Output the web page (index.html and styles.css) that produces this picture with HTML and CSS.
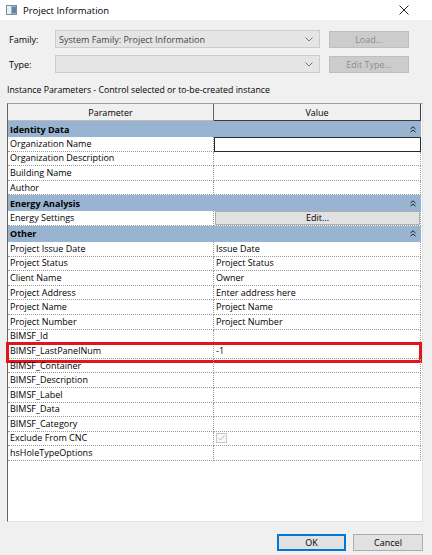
FILE: index.html
```html
<!DOCTYPE html>
<html>
<head>
<meta charset="utf-8">
<link rel="stylesheet" href="styles.css">
</head>
<body>
<div class="dialog">
  <div class="titlebar">
    <svg class="app-icon" width="11" height="10" viewBox="0 0 11 10">
      <rect x="0.5" y="0.5" width="10" height="9" fill="#9fb3c4" stroke="#7d8c99"/>
      <rect x="1" y="1" width="4" height="8" fill="#e9eef2"/>
      <rect x="6" y="2" width="4" height="6" fill="#5f86aa"/>
    </svg>
    <span class="title">Project Information</span>
    <svg class="close" width="10" height="10" viewBox="0 0 10 10">
      <path d="M0.5 0.5 L9.5 9.5 M9.5 0.5 L0.5 9.5" stroke="#222" stroke-width="1" fill="none"/>
    </svg>
  </div>

  <div class="form">
    <div class="form-row">
      <span class="label">Family:</span>
      <div class="combo">
        <span class="combo-text">System Family: Project Information</span>
        <svg class="combo-arrow" width="8" height="5" viewBox="0 0 8 5"><path d="M0.5 0.5 L4 4 L7.5 0.5" stroke="#777" fill="none"/></svg>
      </div>
      <div class="btn disabled">Load...</div>
    </div>
    <div class="form-row">
      <span class="label">Type:</span>
      <div class="combo">
        <span class="combo-text"></span>
        <svg class="combo-arrow" width="8" height="5" viewBox="0 0 8 5"><path d="M0.5 0.5 L4 4 L7.5 0.5" stroke="#777" fill="none"/></svg>
      </div>
      <div class="btn disabled">Edit Type...</div>
    </div>
  </div>

  <div class="caption">Instance Parameters - Control selected or to-be-created instance</div>

  <div class="grid-box">
    <div class="grid">
      <div class="hdr">
        <div class="hcell hp">Parameter</div>
        <div class="hcell hv">Value</div>
      </div>

      <div class="group"><span>Identity Data</span><svg class="collapse" width="6" height="7" viewBox="0 0 6 7"><path d="M0.5 3 L3 0.8 L5.5 3 M0.5 6.2 L3 4 L5.5 6.2" stroke="#222" fill="none"/></svg></div>
      <div class="row"><div class="p">Organization Name</div><div class="v editor"></div></div>
      <div class="row"><div class="p">Organization Description</div><div class="v"></div></div>
      <div class="row"><div class="p">Building Name</div><div class="v"></div></div>
      <div class="row"><div class="p">Author</div><div class="v"></div></div>

      <div class="group"><span>Energy Analysis</span><svg class="collapse" width="6" height="7" viewBox="0 0 6 7"><path d="M0.5 3 L3 0.8 L5.5 3 M0.5 6.2 L3 4 L5.5 6.2" stroke="#222" fill="none"/></svg></div>
      <div class="row"><div class="p">Energy Settings</div><div class="v"><div class="cell-btn">Edit...</div></div></div>

      <div class="group"><span>Other</span><svg class="collapse" width="6" height="7" viewBox="0 0 6 7"><path d="M0.5 3 L3 0.8 L5.5 3 M0.5 6.2 L3 4 L5.5 6.2" stroke="#222" fill="none"/></svg></div>
      <div class="row"><div class="p">Project Issue Date</div><div class="v">Issue Date</div></div>
      <div class="row"><div class="p">Project Status</div><div class="v">Project Status</div></div>
      <div class="row"><div class="p">Client Name</div><div class="v">Owner</div></div>
      <div class="row"><div class="p">Project Address</div><div class="v">Enter address here</div></div>
      <div class="row"><div class="p">Project Name</div><div class="v">Project Name</div></div>
      <div class="row"><div class="p">Project Number</div><div class="v">Project Number</div></div>
      <div class="row"><div class="p">BIMSF_Id</div><div class="v"></div></div>
      <div class="row highlight"><div class="p">BIMSF_LastPanelNum</div><div class="v">-1</div><div class="red-box"></div></div>
      <div class="row"><div class="p">BIMSF_Container</div><div class="v"></div></div>
      <div class="row"><div class="p">BIMSF_Description</div><div class="v"></div></div>
      <div class="row"><div class="p">BIMSF_Label</div><div class="v"></div></div>
      <div class="row"><div class="p">BIMSF_Data</div><div class="v"></div></div>
      <div class="row"><div class="p">BIMSF_Category</div><div class="v"></div></div>
      <div class="row"><div class="p">Exclude From CNC</div><div class="v"><svg class="check" width="11" height="10" viewBox="0 0 11 10"><rect x="0.5" y="0.5" width="10" height="9" fill="#fafafa" stroke="#c8c8c8"/><path d="M2.5 5 L4.5 7 L8.5 2.5" stroke="#b8b8b8" fill="none"/></svg></div></div>
      <div class="row"><div class="p">hsHoleTypeOptions</div><div class="v"></div></div>
    </div>
  </div>

  <div class="actions">
    <div class="btn ok">OK</div>
    <div class="btn">Cancel</div>
  </div>
</div>
</body>
</html>
```

FILE: styles.css
```css
html, body {
  margin: 0;
  padding: 0;
}
body {
  width: 432px;
  height: 555px;
  background: #f0f0f0;
  font-family: "Open Sans", "Noto Sans", "Liberation Sans", sans-serif;
  font-size: 9px;
  color: #000;
  overflow: hidden;
}
.dialog {
  display: flex;
  flex-direction: column;
  height: 555px;
}
.titlebar {
  height: 20px;
  background: #fff;
  display: flex;
  align-items: center;
  padding-left: 6px;
  padding-right: 23px;
}
.app-icon {
  flex: none;
}
.title {
  margin-left: 6px;
  font-size: 9.5px;
  color: #000;
  flex: 1;
}
.close {
  flex: none;
}
.form {
  display: flex;
  flex-direction: column;
  gap: 7px;
  margin-top: 10px;
  padding-left: 9px;
}
.form-row {
  display: flex;
  align-items: center;
  height: 18px;
}
.label {
  width: 46px;
  color: #000;
}
.combo {
  width: 265px;
  height: 18px;
  box-sizing: border-box;
  border: 1px solid #cccccc;
  background: #e5e5e5;
  display: flex;
  align-items: center;
  padding-left: 3px;
  padding-right: 6px;
}
.combo-text {
  flex: 1;
  color: #444;
}
.combo-arrow {
  flex: none;
}
.btn {
  height: 17px;
  box-sizing: border-box;
  border: 1px solid #adadad;
  background: #e1e1e1;
  display: flex;
  align-items: center;
  justify-content: center;
  color: #000;
}
.form .btn {
  width: 80px;
  margin-left: 9px;
}
.btn.disabled {
  background: #cccccc;
  border-color: #bfbfbf;
  color: #8d8d8d;
}
.caption {
  margin-top: 11px;
  margin-left: 7px;
  height: 12px;
  line-height: 12px;
  font-size: 8.75px;
}
.grid-box {
  margin-top: 7px;
  margin-left: 7px;
  width: 416px;
  height: 419px;
  box-sizing: border-box;
  background: #fff;
  border-left: 1px solid #646464;
  border-bottom: 1px solid #e3e3e3;
  border-right: 1px solid #e3e3e3;
  border-top: 1px solid #a0a0a0;
}
.grid {
  width: 413px;
  display: flex;
  flex-direction: column;
}
.hdr {
  display: grid;
  grid-template-columns: 206px 207px;
  height: 17px;
}
.hcell {
  display: flex;
  align-items: center;
  justify-content: center;
  background: #f0f0f0;
  box-sizing: border-box;
}
.hp {
  border-right: 1px solid #646464;
  border-bottom: 1px solid #bcbcbc;
}
.hv {
  border-right: 1px solid #3c3c3c;
  border-bottom: 1px solid #3c3c3c;
}
.group {
  height: 16px;
  background: #99b4d1;
  display: flex;
  align-items: center;
  justify-content: space-between;
  padding-left: 2px;
  padding-right: 5px;
  font-weight: bold;
}
.collapse {
  flex: none;
}
.row {
  position: relative;
  display: grid;
  grid-template-columns: 206px 207px;
  height: 14.6px;
}
.p, .v {
  box-sizing: border-box;
  border-bottom: 1px dotted #9a9a9a;
  border-right: 1px dotted #9a9a9a;
  padding-left: 2px;
  display: flex;
  align-items: center;
  white-space: nowrap;
  overflow: hidden;
  line-height: 12px;
}
.v.editor {
  border: 1px solid #2b2b2b;
}
.cell-btn {
  margin-left: -1px;
  width: 206px;
  height: 14px;
  box-sizing: border-box;
  background: #e1e1e1;
  border: 1px solid #adadad;
  display: flex;
  align-items: center;
  justify-content: center;
}
.red-box {
  position: absolute;
  left: -2px;
  right: -1px;
  top: -2px;
  bottom: -4px;
  border: 3px solid #e2141c;
  pointer-events: none;
}
.check {
  display: block;
}
.actions {
  margin-top: 12px;
  display: flex;
  justify-content: flex-end;
  gap: 7px;
  padding-right: 9px;
}
.actions .btn {
  width: 70px;
  height: 17px;
}
.actions .btn.ok {
  width: 69px;
  border: 1px solid #0078d7;
  box-shadow: inset 0 0 0 1px #0078d7;
}
```
